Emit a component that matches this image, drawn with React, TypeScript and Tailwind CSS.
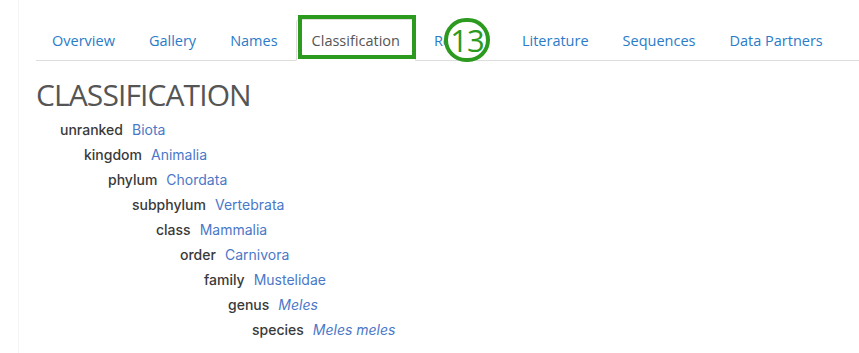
import React from "react";

const tabs = ["Overview", "Gallery", "Names", "Classification", "Related", "Literature", "Sequences", "Data Partners"];

const ranks: { rank: string; name: string; italic?: boolean }[] = [
  { rank: "unranked", name: "Biota" },
  { rank: "kingdom", name: "Animalia" },
  { rank: "phylum", name: "Chordata" },
  { rank: "subphylum", name: "Vertebrata" },
  { rank: "class", name: "Mammalia" },
  { rank: "order", name: "Carnivora" },
  { rank: "family", name: "Mustelidae" },
  { rank: "genus", name: "Meles", italic: true },
  { rank: "species", name: "Meles meles", italic: true },
];

const indents = ["pl-0", "pl-[24px]", "pl-[48px]", "pl-[72px]", "pl-[96px]", "pl-[120px]", "pl-[144px]", "pl-[168px]", "pl-[192px]"];

export default function App() {
  return (
    <div className="relative w-[859px] h-[353px] bg-white overflow-hidden">
      <div className="ml-[18px] h-full border-l border-[#f4f4f4] pl-[17px] pt-[19px]">
        <ul className="flex border-b border-[#dddddd] font-['Open_Sans',sans-serif] text-[14.5px] leading-[20px]">
          {tabs.map((t) => (
            <li key={t} className={`-mb-px ${t === "Related" ? "mr-[5px]" : "mr-[2px]"}`}>
              <span
                className={
                  t === "Classification"
                    ? "block px-[15px] pt-[11px] pb-[9px] border border-[#dddddd] border-b-white bg-white text-[#555555] rounded-t"
                    : "block px-[15px] pt-[11px] pb-[9px] border border-transparent text-[#2a7bc8]"
                }
              >
                {t}
              </span>
            </li>
          ))}
        </ul>
        <h2 className="mt-[16px] font-['Open_Sans',sans-serif] text-[30px] leading-[36px] text-[#555555] tracking-[-0.9px]">
          CLASSIFICATION
        </h2>
        <div className="mt-[4px] pl-[24px] font-['Inter',sans-serif] text-[14px]">
          {ranks.map((r, i) => (
            <div key={r.rank} className={`flex h-[25px] items-center gap-[9px] ${indents[i]}`}>
              <span className="font-medium text-[#3a3a3a]">{r.rank}</span>
              <span className={`text-[#4a78c8] ${r.italic ? "italic" : ""}`}>{r.name}</span>
            </div>
          ))}
        </div>
      </div>
      {/* annotation box */}
      <div className="absolute left-[298px] top-[15px] w-[118px] h-[44px] border-[4px] border-[#2b9a1e]" />
      {/* annotation circle */}
      <div className="absolute left-[444px] top-[18px] w-[46px] h-[44px] rounded-full border-[4px] border-[#2b9a1e] bg-white flex items-center justify-center font-['Open_Sans',sans-serif] text-[31px] leading-none tracking-[-1px] text-[#2b9a1e]">
        13
      </div>
    </div>
  );
}
